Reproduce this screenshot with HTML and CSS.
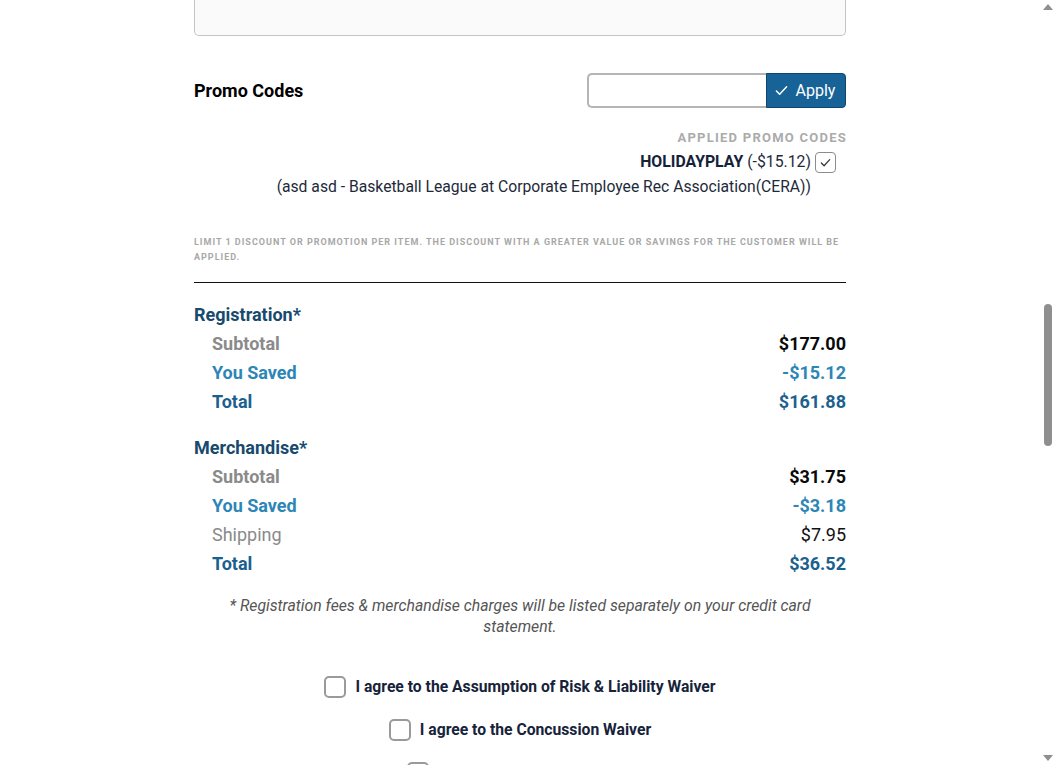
FILE: index.html
```html
<!DOCTYPE html>
<html>
<head>
<meta charset="utf-8">
<link rel="stylesheet" href="styles.css">
</head>
<body>
<main class="page">
  <div class="notes-box"></div>

  <div class="promo-row">
    <div class="promo-title">Promo Codes</div>
    <div class="promo-form">
      <input class="promo-input" type="text">
      <button class="apply-btn"><svg class="apply-check" viewBox="0 0 14 14" width="13" height="13"><path d="M1.5 7.5 L5 11 L12.5 3" fill="none" stroke="#fff" stroke-width="1.6" stroke-linecap="round" stroke-linejoin="round"/></svg>Apply</button>
    </div>
  </div>

  <div class="applied">
    <div class="applied-label">APPLIED PROMO CODES</div>
    <div class="applied-code"><strong>HOLIDAYPLAY</strong> (-$15.12) <span class="code-check"><svg viewBox="0 0 14 14" width="13" height="13"><path d="M2.5 7.5 L5.5 10.5 L11.5 4" fill="none" stroke="#333" stroke-width="1.3" stroke-linecap="round" stroke-linejoin="round"/></svg></span></div>
    <div class="applied-desc">(asd asd - Basketball League at Corporate Employee Rec Association(CERA))</div>
  </div>

  <p class="disclaimer">LIMIT 1 DISCOUNT OR PROMOTION PER ITEM. THE DISCOUNT WITH A GREATER VALUE OR SAVINGS FOR THE CUSTOMER WILL BE APPLIED.</p>

  <hr class="divider">

  <section class="summary">
    <h3 class="summary-title">Registration*</h3>
    <div class="line sub"><span>Subtotal</span><span class="amt">$177.00</span></div>
    <div class="line saved"><span>You Saved</span><span>-$15.12</span></div>
    <div class="line total"><span>Total</span><span>$161.88</span></div>
  </section>

  <section class="summary">
    <h3 class="summary-title">Merchandise*</h3>
    <div class="line sub"><span>Subtotal</span><span class="amt">$31.75</span></div>
    <div class="line saved"><span>You Saved</span><span>-$3.18</span></div>
    <div class="line ship"><span>Shipping</span><span class="amt">$7.95</span></div>
    <div class="line total"><span>Total</span><span>$36.52</span></div>
  </section>

  <p class="note">* Registration fees &amp; merchandise charges will be listed separately on your credit card statement.</p>

  <div class="agree-list">
    <label class="agree"><span class="box"></span>I agree to the Assumption of Risk &amp; Liability Waiver</label>
    <label class="agree"><span class="box"></span>I agree to the Concussion Waiver</label>
    <label class="agree"><span class="box"></span>I agree to the Refund Policy</label>
  </div>
</main>

<div class="scrollbar">
  <span class="arrow up"></span>
  <span class="thumb"></span>
  <span class="arrow down"></span>
</div>
</body>
</html>
```

FILE: styles.css
```css
html, body {
  margin: 0;
  padding: 0;
  height: 765px;
  overflow: hidden;
  background: #fff;
}
body {
  padding-right: 15px;
  font-family: Roboto, "Liberation Sans", Arial, sans-serif;
  color: #111;
}
.page {
  width: 652px;
  margin: 0 auto;
}
.notes-box {
  height: 35px;
  border: 1px solid #c4c4c4;
  border-top: 0;
  border-radius: 0 0 5px 5px;
  background: #fafafa;
}
.promo-row {
  margin-top: 37px;
  display: flex;
  justify-content: space-between;
  align-items: center;
  height: 35px;
}
.promo-title {
  font-size: 18px;
  font-weight: 700;
  color: #000;
}
.promo-form {
  display: flex;
  height: 35px;
}
.promo-input {
  box-sizing: border-box;
  width: 179px;
  height: 35px;
  border: 2px solid #b5b5b5;
  border-right: 0;
  border-radius: 5px 0 0 5px;
  padding: 0 8px;
  outline: none;
  background: #fff;
}
.apply-btn {
  box-sizing: border-box;
  width: 80px;
  height: 35px;
  border: 1px solid #0d4670;
  border-radius: 0 4px 4px 0;
  background: #176398;
  color: #fff;
  font-family: Roboto, "Liberation Sans", Arial, sans-serif;
  font-size: 16px;
  display: flex;
  align-items: center;
  justify-content: center;
  gap: 8px;
  padding: 0 2px 0 0;
}
.applied {
  margin-top: 22px;
  text-align: right;
}
.applied-label {
  font-size: 13px;
  font-weight: 700;
  color: #ababab;
  letter-spacing: 1.25px;
  margin-right: -1px;
  line-height: 16px;
}
.applied-code {
  margin-top: 5px;
  margin-right: 10px;
  font-size: 15.8px;
  line-height: 22px;
  color: #1d2a3a;
  display: flex;
  justify-content: flex-end;
  align-items: center;
  gap: 4px;
}
.applied-code strong { color: #132238; }
.code-check {
  box-sizing: border-box;
  width: 21px;
  height: 21px;
  border: 1.5px solid #8c8c8c;
  border-radius: 4px;
  display: inline-flex;
  align-items: center;
  justify-content: center;
}
.applied-desc {
  margin-right: 35px;
  font-size: 15.7px;
  line-height: 22px;
  color: #1d2a3a;
  margin-top: 3px;
}
.disclaimer {
  margin: 37px 0 0;
  font-size: 9px;
  font-weight: 700;
  line-height: 15px;
  letter-spacing: 1px;
  color: #a8a8a8;
}
.divider {
  margin: 17px 0 0;
  border: 0;
  border-top: 1px solid #111;
}
.summary {
  margin-top: 20px;
}
.summary + .summary { margin-top: 22px; }
.summary-title {
  margin: 0;
  font-size: 18px;
  line-height: 24px;
  font-weight: 700;
  color: #174a6c;
}
.line {
  display: flex;
  justify-content: space-between;
  padding-left: 18px;
  margin-top: 5px;
  font-size: 18px;
  line-height: 24px;
  font-weight: 700;
}
.line.sub { color: #8a8a8a; }
.line.sub .amt { color: #0a0a0a; }
.line.saved { color: #2c86b6; }
.line.total { color: #1c618e; }
.line.ship { color: #8a8a8a; font-weight: 400; }
.line.ship .amt { color: #111; }
.note {
  margin: 19px 0 0;
  text-align: center;
  font-size: 15.75px;
  line-height: 21px;
  font-style: italic;
  color: #555;
  padding: 0 30px;
}
.agree-list {
  margin-top: 38px;
  display: flex;
  flex-direction: column;
  align-items: center;
  gap: 20px;
}
.agree {
  display: flex;
  align-items: center;
  gap: 9px;
  font-size: 15.7px;
  font-weight: 700;
  line-height: 23px;
  color: #16233a;
}
.box {
  box-sizing: border-box;
  width: 22px;
  height: 22px;
  border: 2px solid #9a9a9a;
  border-radius: 5px;
  background: #fff;
}
.scrollbar {
  position: fixed;
  top: 0;
  right: 0;
  width: 15px;
  height: 765px;
  background: #fff;
}
.thumb {
  position: absolute;
  left: 4px;
  top: 304px;
  width: 8px;
  height: 142px;
  border-radius: 4px;
  background: #8f8f8f;
}
.arrow {
  position: absolute;
  left: 3px;
  width: 0;
  height: 0;
  border-left: 5px solid transparent;
  border-right: 5px solid transparent;
}
.arrow.up { top: 4px; border-bottom: 6px solid #8f8f8f; }
.arrow.down { bottom: 4px; border-top: 6px solid #8f8f8f; }
```
